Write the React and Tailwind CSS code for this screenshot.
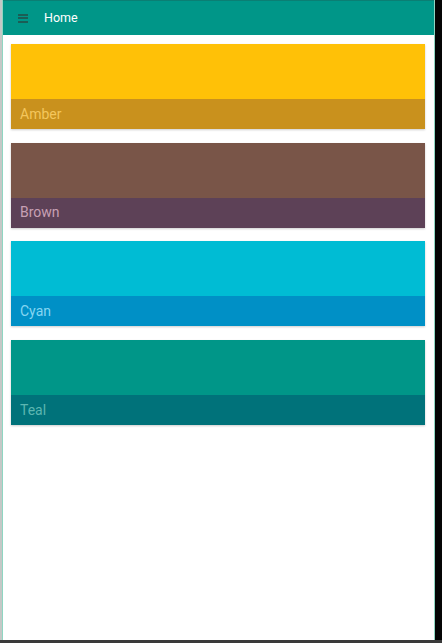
import React from 'react'

const cards = [
    { name: 'Amber', top: 'bg-[#ffc107]', bottom: 'bg-[#c9911d]', text: 'text-[#f4c65c]' },
    { name: 'Brown', top: 'bg-[#795548]', bottom: 'bg-[#5d4157]', text: 'text-[#c8a0b4]' },
    { name: 'Cyan', top: 'bg-[#00bcd4]', bottom: 'bg-[#0090c6]', text: 'text-[#86d6f2]' },
    { name: 'Teal', top: 'bg-[#009688]', bottom: 'bg-[#00727a]', text: 'text-[#5db6b1]' },
];

function ColorCard({ card }) {
    return (
        <div className="flex h-[85.3px] flex-col shadow-[0_1px_2px_rgba(0,0,0,0.2)]">
            <div className={`flex-1 ${card.top}`}></div>
            <div className={`flex h-[30px] items-center px-[9px] ${card.bottom}`}>
                <span className={`text-[14px] ${card.text}`}>{card.name}</span>
            </div>
        </div>
    );
}

export default function App() {
    return (
        <div className="flex h-[643px] w-[442px] flex-col bg-[#3a3a3a]" style={{ fontFamily: 'Roboto, "Noto Sans", sans-serif' }}>
            <div className="flex h-[640px]">
                {/* desktop behind the window */}
                <div className="w-[2px] bg-[#c4c8c6]"></div>
                <div className="flex w-[433px] flex-col border-x border-[#8fd6c2] bg-white">
                    <header className="flex h-[35px] items-center border-t border-[#0b7f74] bg-[#009688] pl-[15px]">
                        <div className="flex w-[10px] flex-col gap-[1.5px]">
                            <span className="h-[2px] bg-[#1b5e56]"></span>
                            <span className="h-[2px] bg-[#1b5e56]"></span>
                            <span className="h-[2px] bg-[#1b5e56]"></span>
                        </div>
                        <span className="ml-[16px] text-[12.5px] text-white">Home</span>
                    </header>
                    <main className="flex flex-col gap-[13.3px] pl-[8px] pr-[9px] pt-[9px]">
                        {cards.map((card) => (
                            <ColorCard key={card.name} card={card} />
                        ))}
                    </main>
                </div>
                <div className="flex-1 bg-[#050505]"></div>
            </div>
            <div className="h-[3px] bg-[#3a3a3a]"></div>
        </div>
    );
}
